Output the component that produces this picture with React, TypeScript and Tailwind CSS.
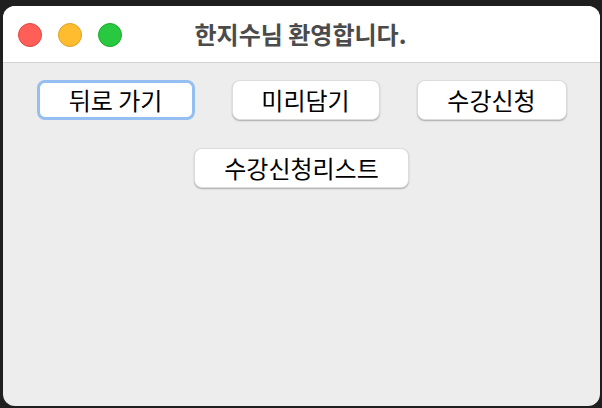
import React from 'react';

const font = { fontFamily: '"Noto Sans CJK KR", "Noto Sans", sans-serif' };

type BtnProps = { label: string; width: string; focused?: boolean };

const Btn: React.FC<BtnProps> = ({ label, width, focused }) => (
  <button
    className={
      focused
        ? `${width} h-[40px] rounded-[8px] bg-white border-[3px] border-[#94bff0] text-[24px] font-normal text-black leading-none flex items-center justify-center`
        : `${width} h-[40px] rounded-[8px] bg-white border border-[#dcdcdc] shadow-[0_1px_1.5px_rgba(0,0,0,0.28)] text-[24px] font-normal text-black leading-none flex items-center justify-center`
    }
  >
    {label}
  </button>
);

const App: React.FC = () => {
  return (
    <div className="w-[602px] h-[408px] bg-[#1f1f1f] pt-[6px] pl-[3px] pr-[2px] pb-[2px]" style={font}>
      <div className="w-full h-full rounded-[12px] overflow-hidden flex flex-col bg-[#ededed]">
        <div className="h-[57px] bg-white border-b border-[#d3d3d3] grid grid-cols-[1fr_auto_1fr] items-center">
          <div className="flex items-center gap-[16px] pl-[15px] pt-[1px]">
            <span className="w-[24px] h-[24px] rounded-full bg-[#ff5f57] border border-[#e2463f]" />
            <span className="w-[24px] h-[24px] rounded-full bg-[#febc2e] border border-[#dea123]" />
            <span className="w-[24px] h-[24px] rounded-full bg-[#28c840] border border-[#1aab29]" />
          </div>
          <div className="text-[24px] font-bold text-[#4b4b4b] leading-none pb-[1px] pr-[2px]">한지수님 환영합니다.</div>
          <div />
        </div>
        <div className="flex-1 flex flex-col items-center pt-[17px] gap-[28px]">
          <div className="flex gap-[37px]">
            <Btn label="뒤로 가기" width="w-[158px]" focused />
            <Btn label="미리담기" width="w-[148px]" />
            <Btn label="수강신청" width="w-[150px]" />
          </div>
          <Btn label="수강신청리스트" width="w-[215px]" />
        </div>
      </div>
    </div>
  );
};

export default App;
